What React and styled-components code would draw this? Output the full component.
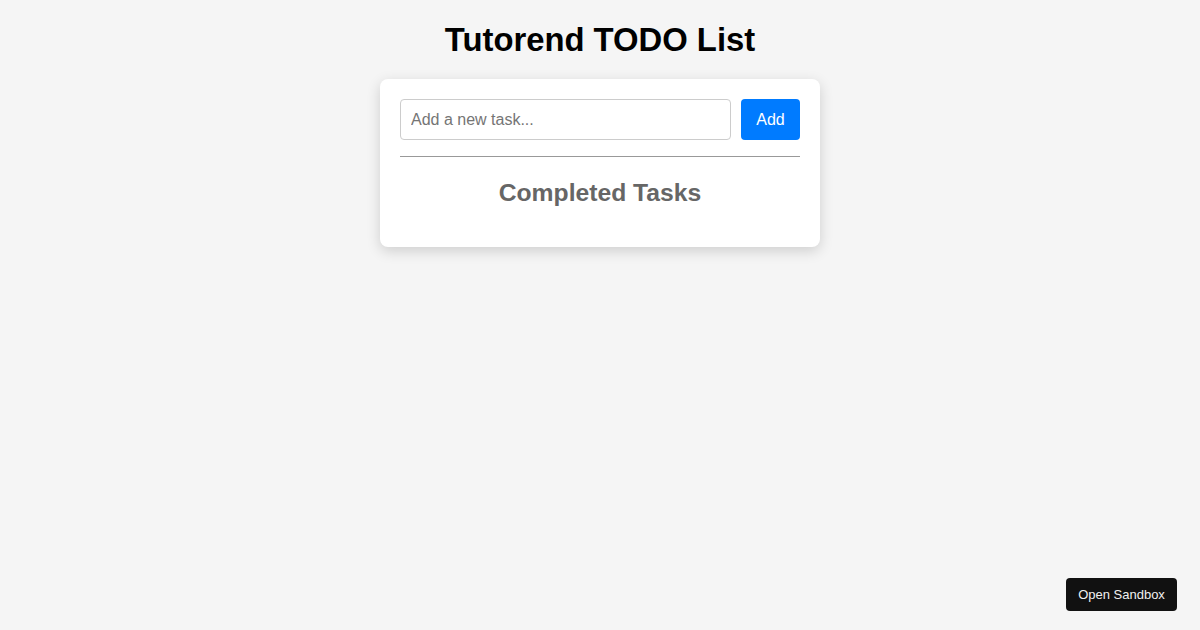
import React, { useState } from "react";
import styled, { createGlobalStyle } from "styled-components";

const GlobalStyle = createGlobalStyle`
  body {
    margin: 0;
    background-color: #f5f5f5;
    font-family: "Liberation Sans", Arial, sans-serif;
  }
`;

const App = () => {
  const [task, setTask] = useState("");

  return (
    <Page>
      <GlobalStyle />
      <Title>Tutorend TODO List</Title>
      <Card>
        <InputRow>
          <TaskInput
            type="text"
            placeholder="Add a new task..."
            value={task}
            onChange={(e) => setTask(e.target.value)}
          />
          <AddButton onClick={() => setTask("")}>Add</AddButton>
        </InputRow>
        <Divider />
        <SectionTitle>Completed Tasks</SectionTitle>
      </Card>
      <SandboxButton>Open Sandbox</SandboxButton>
    </Page>
  );
};

export default App;

const Page = styled.div`
  display: flex;
  flex-direction: column;
  align-items: center;
  min-height: 630px;
`;

const Title = styled.h1`
  font-size: 32.8px;
  font-weight: bold;
  color: #000;
  margin: 21px 0 20px;
  line-height: 38px;
`;

const Card = styled.div`
  width: 440px;
  box-sizing: border-box;
  padding: 20px;
  background-color: white;
  border-radius: 8px;
  box-shadow: 0 4px 14px rgba(0, 0, 0, 0.16);
`;

const InputRow = styled.div`
  display: flex;
  flex-direction: row;
  gap: 10px;
  margin-bottom: 16px;
`;

const TaskInput = styled.input`
  flex: 1;
  height: 41px;
  box-sizing: border-box;
  padding: 10px;
  font-size: 16px;
  font-family: "Liberation Sans", Arial, sans-serif;
  border: 1px solid #ccc;
  border-radius: 4px;
  outline: none;

  &::placeholder {
    color: #757575;
  }
`;

const AddButton = styled.button`
  width: 59px;
  height: 41px;
  border: none;
  border-radius: 4px;
  background-color: #007bff;
  color: white;
  font-size: 16px;
  font-family: "Liberation Sans", Arial, sans-serif;
  cursor: pointer;
`;

const Divider = styled.hr`
  margin: 0;
  border: none;
  border-top: 1px solid #999;
`;

const SectionTitle = styled.h2`
  margin: 22px 0 20px;
  text-align: center;
  font-size: 24.7px;
  line-height: 28px;
  font-weight: bold;
  color: #666;
`;

const SandboxButton = styled.button`
  position: fixed;
  right: 23px;
  bottom: 19px;
  width: 111px;
  height: 33px;
  border: none;
  border-radius: 4px;
  background-color: #111;
  color: #f0f0f0;
  font-size: 13px;
  font-family: "Liberation Sans", Arial, sans-serif;
`;
